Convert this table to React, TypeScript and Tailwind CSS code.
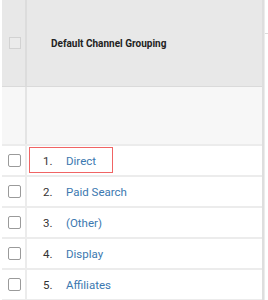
import React from "react";

const rows = ["Direct", "Paid Search", "(Other)", "Display", "Affiliates"];

export default function App() {
  return (
    <div
      className="w-[268px] h-[300px] bg-white overflow-hidden flex"
      style={{ fontFamily: "Roboto, 'Liberation Sans', sans-serif" }}
    >
      <div className="ml-[2px] w-[262px] shrink-0 border-r-2 border-[#dedede]">
        {/* header */}
        <div className="flex h-[87px] bg-[#e8e8e8] border-b border-[#dadada]">
          <div className="w-[25px] shrink-0 border-r-2 border-[#dcdcdc] flex items-center justify-center">
            <div className="w-[12px] h-[12px] border border-[#d2d2d2] bg-[#ebebeb] ml-[3px]" />
          </div>
          <div className="flex items-center pl-[24px] text-[10px] font-bold text-[#222]">
            Default Channel Grouping
          </div>
        </div>
        {/* spacer */}
        <div className="flex h-[59px] bg-[#f7f7f7] border-b-2 border-[#ececec]">
          <div className="w-[25px] shrink-0 border-r-2 border-[#e4e4e4]" />
        </div>
        {rows.map((r, i) => (
          <div key={r} className="flex h-[31px] border-b-2 border-[#ececec] bg-white">
            <div className="w-[25px] shrink-0 border-r-2 border-[#ececec] flex items-center justify-center">
              <div className="w-[13px] h-[13px] border-[1.5px] border-[#9a9a9a] rounded-[2px] ml-[2px]" />
            </div>
            <div className="flex items-center relative text-[11.5px] pt-[2px]">
              {i === 0 && (
                <div className="absolute left-[2px] top-[1px] w-[84px] h-[26px] border border-[#f06464]" />
              )}
              <span className="ml-[16px] w-[23px] text-[#333]">{i + 1}.</span>
              <span className="text-[#3b78b0]">{r}</span>
            </div>
          </div>
        ))}
      </div>
      <div className="flex-1 border-l border-[#ececec]">
        <div className="h-[34px] border-b border-[#dcdcdc]" />
      </div>
    </div>
  );
}
